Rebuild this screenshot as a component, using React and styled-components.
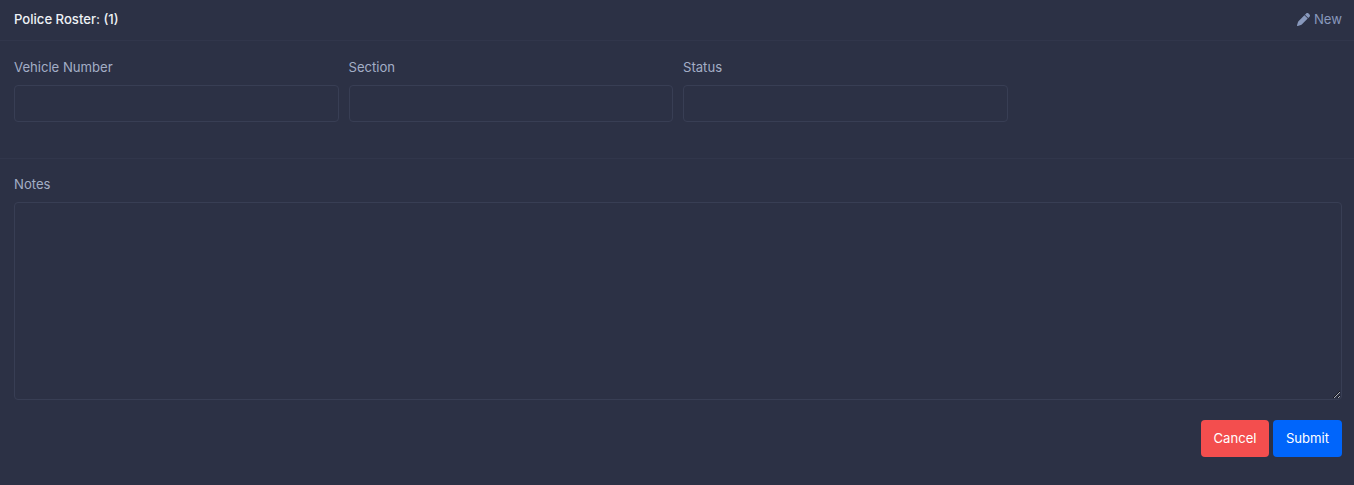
import React from 'react';
import styled, { createGlobalStyle } from 'styled-components';

const GlobalStyle = createGlobalStyle`
  html, body {
    margin: 0;
    padding: 0;
    height: 100%;
    background: #2c3145;
    font-family: Inter, "Liberation Sans", sans-serif;
  }
`;

const Card = styled.div`
  display: flex;
  flex-direction: column;
  height: 485px;
  overflow: hidden;
  background: #2c3145;
`;

const Header = styled.div`
  display: flex;
  align-items: center;
  justify-content: space-between;
  padding: 10px 12px 12px 14px;
  line-height: 18px;
  border-bottom: 1px solid #31364b;
`;

const Title = styled.div`
  font-size: 13.12px;
  font-weight: 500;
  color: #eef1f6;
`;

const NewLink = styled.a`
  display: flex;
  align-items: center;
  gap: 4px;
  font-size: 13.12px;
  color: #8898bc;
`;

const FieldRow = styled.div`
  display: grid;
  grid-template-columns: repeat(3, 324.5px);
  column-gap: 10px;
  padding: 17px 14px 36px;
  border-bottom: 1px solid #31364b;
`;

const Field = styled.div`
  display: flex;
  flex-direction: column;
`;

const Label = styled.label`
  font-size: 13.12px;
  line-height: 18px;
  margin-bottom: 9px;
  color: #a3aec6;
`;

const Input = styled.input`
  box-sizing: border-box;
  height: 37px;
  background: transparent;
  border: 1px solid #383e54;
  border-radius: 4px;
  outline: none;
`;

const NotesSection = styled.div`
  display: flex;
  flex-direction: column;
  padding: 16px 12px 0 14px;
`;

const Notes = styled.textarea`
  box-sizing: border-box;
  display: block;
  width: 100%;
  height: 198px;
  background: transparent;
  border: 1px solid #383e54;
  border-radius: 4px;
  outline: none;
  resize: vertical;
  color-scheme: dark;
`;

const Actions = styled.div`
  display: flex;
  justify-content: flex-end;
  gap: 4px;
  padding: 20px 12px 0 14px;
`;

const Button = styled.button`
  height: 37px;
  width: ${p => p.$width}px;
  padding: 0 0 1px;
  border: 0;
  border-radius: 4px;
  background: ${p => p.$color};
  color: #fff;
  font-family: inherit;
  font-size: 13.12px;
`;

const PencilIcon = () => (
  <svg width="13" height="13" viewBox="0 0 512 512" fill="currentColor" aria-hidden="true">
    <path d="M362.7 19.3 314.3 67.7l130 130 48.4-48.4c25-25 25-65.5 0-90.5l-39.4-39.5c-25-25-65.5-25-90.5 0zM291.7 90.3 58.6 323.5c-10.4 10.4-18 23.3-22.2 37.4L1 481.2c-2.5 8.5-.2 17.6 6 23.8s15.3 8.5 23.7 6.1l120.3-35.4c14.1-4.2 27-11.8 37.4-22.2l233.3-233.2-130-130z" />
  </svg>
);

export default function App() {
  return (
    <>
      <GlobalStyle />
      <Card>
        <Header>
          <Title>Police Roster: (1)</Title>
          <NewLink>
            <PencilIcon />
            New
          </NewLink>
        </Header>
        <FieldRow>
          <Field>
            <Label>Vehicle Number</Label>
            <Input />
          </Field>
          <Field>
            <Label>Section</Label>
            <Input />
          </Field>
          <Field>
            <Label>Status</Label>
            <Input />
          </Field>
        </FieldRow>
        <NotesSection>
          <Label>Notes</Label>
          <Notes />
        </NotesSection>
        <Actions>
          <Button $color="#f34e4e" $width={68}>Cancel</Button>
          <Button $color="#0065fb" $width={69}>Submit</Button>
        </Actions>
      </Card>
    </>
  );
}
